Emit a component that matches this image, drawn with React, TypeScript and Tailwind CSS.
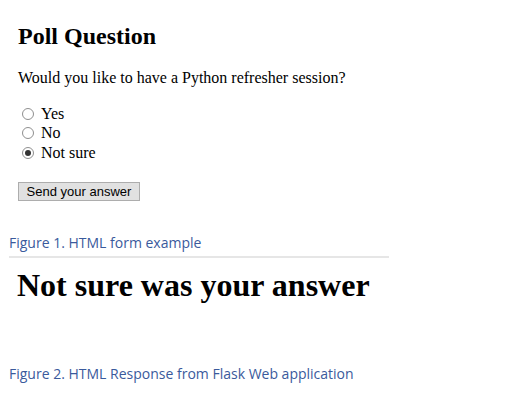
const serif = { fontFamily: '"Liberation Serif", "Times New Roman", serif' }

function Radio({ checked }: { checked?: boolean }) {
  return (
    <span className="flex h-[12px] w-[12px] items-center justify-center rounded-full border border-[#8f8f8f] bg-white">
      {checked && <span className="h-[6px] w-[6px] rounded-full bg-[#333]" />}
    </span>
  )
}

export default function App() {
  const options = [
    { label: 'Yes', checked: false },
    { label: 'No', checked: false },
    { label: 'Not sure', checked: true },
  ]

  return (
    <div className="h-[416px] w-[524px] bg-white text-black">
      <div className="px-[18px] pt-[22px] font-['Liberation_Serif',serif]">
        <h1 className="text-[24px] font-bold leading-[28px]">Poll Question</h1>
        <p className="mt-[18px] text-[16px] leading-[20px]">Would you like to have a Python refresher session?</p>
        <div className="mt-[16px] flex flex-col">
          {options.map((o) => (
            <label key={o.label} className="flex h-[19.5px] items-center gap-[7px] pl-[4px] text-[16px]">
              <Radio checked={o.checked} />
              <span>{o.label}</span>
            </label>
          ))}
        </div>
        <button className="mt-[19px] h-[19px] w-[122px] border border-[#adadad] bg-[#e1e1e1] font-['Liberation_Sans',Arial,sans-serif] text-[13px] leading-[17px] text-black">
          Send your answer
        </button>
      </div>

      <div className="mt-[30px] px-[9px] font-['Open_Sans',sans-serif] text-[14px] leading-[19px] text-[#3a5a9c]">
        Figure 1. HTML form example
      </div>
      <div className="ml-[9px] mt-[4px] h-[2px] w-[380px] bg-[#e6e6e6]" />

      <h2 className="mt-[8px] pl-[17px] text-[32px] font-bold leading-[38px]" style={serif}>
        Not sure was your answer
      </h2>

      <div className="mt-[60px] px-[9px] font-['Open_Sans',sans-serif] text-[14px] leading-[19px] text-[#3a5a9c]">
        Figure 2. HTML Response from Flask Web application
      </div>
    </div>
  )
}
